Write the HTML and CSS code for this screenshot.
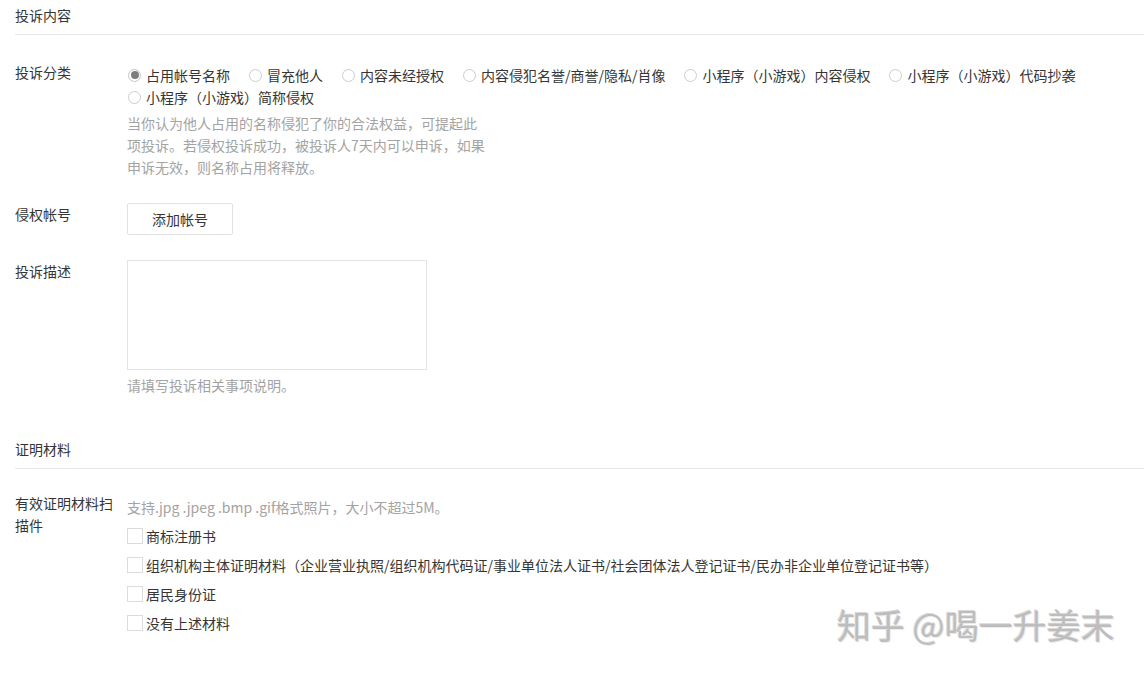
FILE: index.html
```html
<!DOCTYPE html>
<html lang="zh-CN">
<head>
<meta charset="utf-8">
<title>投诉</title>
<link rel="stylesheet" href="styles.css">
</head>
<body>
<div class="page">
  <section class="section">
    <h2 class="section-title">投诉内容</h2>
    <div class="section-body first">
      <div class="row">
        <div class="label">投诉分类</div>
        <div class="content text-content">
          <div class="radios">
            <label class="radio checked"><span class="dot"></span>占用帐号名称</label>
            <label class="radio"><span class="dot"></span>冒充他人</label>
            <label class="radio"><span class="dot"></span>内容未经授权</label>
            <label class="radio"><span class="dot"></span>内容侵犯名誉/商誉/隐私/肖像</label>
            <label class="radio"><span class="dot"></span>小程序（小游戏）内容侵权</label>
            <label class="radio"><span class="dot"></span>小程序（小游戏）代码抄袭</label>
            <label class="radio"><span class="dot"></span>小程序（小游戏）简称侵权</label>
          </div>
          <p class="help help-wide">当你认为他人占用的名称侵犯了你的合法权益，可提起此项投诉。若侵权投诉成功，被投诉人7天内可以申诉，如果申诉无效，则名称占用将释放。</p>
        </div>
      </div>
      <div class="row">
        <div class="label">侵权帐号</div>
        <div class="content">
          <button class="btn" type="button">添加帐号</button>
        </div>
      </div>
      <div class="row">
        <div class="label">投诉描述</div>
        <div class="content">
          <div class="textarea"></div>
          <p class="help hint">请填写投诉相关事项说明。</p>
        </div>
      </div>
    </div>
  </section>

  <section class="section second">
    <h2 class="section-title">证明材料</h2>
    <div class="section-body">
      <div class="row">
        <div class="label">有效证明材料扫描件</div>
        <div class="content text-content wide">
          <p class="help support">支持.jpg .jpeg .bmp .gif格式照片，大小不超过5M。</p>
          <label class="check"><span class="box"></span>商标注册书</label>
          <label class="check"><span class="box"></span>组织机构主体证明材料（企业营业执照/组织机构代码证/事业单位法人证书/社会团体法人登记证书/民办非企业单位登记证书等）</label>
          <label class="check"><span class="box"></span>居民身份证</label>
          <label class="check"><span class="box"></span>没有上述材料</label>
        </div>
      </div>
    </div>
  </section>
</div>
<div class="watermark">知乎 @喝一升姜末</div>
</body>
</html>
```

FILE: styles.css
```css
* { box-sizing: border-box; }
html, body {
  margin: 0;
  padding: 0;
  background: #fff;
}
body {
  font-family: "Microsoft YaHei", "Noto Sans CJK SC", "Noto Sans", sans-serif;
  font-size: 14px;
  color: #353535;
  width: 1144px;
  height: 674px;
  overflow: hidden;
  position: relative;
}
.page {
  padding-left: 15px;
}
.section-title {
  margin: 0;
  font-size: 14px;
  font-weight: normal;
  line-height: 31px;
  height: 35px;
  padding-bottom: 3px;
  border-bottom: 1px solid #e7e7e7;
  color: #353535;
}
.section-body.first { padding-top: 26px; }
.section.second { margin-top: 38px; }
.section.second .section-body { padding-top: 23px; }
.row {
  display: flex;
  align-items: flex-start;
  margin-bottom: 25px;
}
.label {
  width: 100px;
  margin-right: 12px;
  line-height: 22px;
  flex: none;
}
.content {
  flex: 1;
  min-width: 0;
}
.text-content { padding-top: 3px; }
.text-content.wide { padding-top: 4px; }
.radios {
  display: flex;
  flex-wrap: wrap;
  line-height: 22px;
}
.radio {
  display: inline-flex;
  align-items: center;
  margin-right: 18px;
  white-space: nowrap;
}
.dot {
  width: 13px;
  height: 13px;
  border-radius: 50%;
  border: 1px solid #cdcdcd;
  background: #fff;
  margin-left: 1px;
  margin-right: 5px;
  position: relative;
  flex: none;
}
.radio.checked .dot {
  border-color: #c4c4c4;
}
.radio.checked .dot::after {
  content: "";
  position: absolute;
  left: 1.5px;
  top: 1.5px;
  width: 8px;
  height: 8px;
  border-radius: 50%;
  background: #7d7d7d;
}
.help {
  margin: 0;
  color: #a3a3a3;
  line-height: 22px;
}
.help-wide {
  width: 360px;
  margin-top: 4px;
}
.btn {
  width: 106px;
  height: 32px;
  border: 1px solid #e2e2e2;
  border-radius: 2px;
  background: #fff;
  font-family: inherit;
  font-size: 14px;
  color: #353535;
  padding: 0;
  line-height: 30px;
}
.textarea {
  width: 300px;
  height: 110px;
  border: 1px solid #e4e4e4;
}
.hint { margin-top: 4px; }
.support { margin-bottom: 3px; }
.check {
  display: flex;
  align-items: center;
  height: 29px;
  line-height: 22px;
  white-space: nowrap;
}
.box {
  width: 16px;
  height: 16px;
  border: 1px solid #dcdcdc;
  background: #fff;
  margin-right: 3px;
  flex: none;
}
.watermark {
  position: absolute;
  left: 837px;
  top: 605px;
  font-size: 34px;
  line-height: 40px;
  color: #bdbdbd;
  text-shadow: 1px 1px 0 #ececec, -1px -1px 0 #d8d8d8;
  white-space: nowrap;
}
```
